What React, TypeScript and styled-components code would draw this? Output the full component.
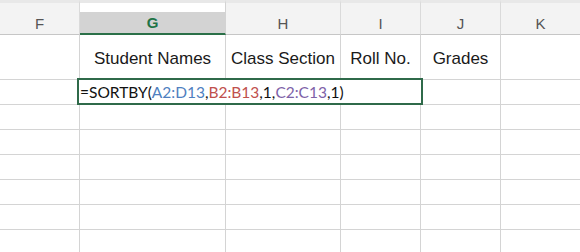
import styled, { createGlobalStyle } from "styled-components";

const GlobalStyle = createGlobalStyle`
  html, body {
    margin: 0;
    padding: 0;
    background: #ffffff;
    overflow: hidden;
  }
`;

const columns = [
  { name: "F", width: 80 },
  { name: "G", width: 146, active: true },
  { name: "H", width: 115 },
  { name: "I", width: 80 },
  { name: "J", width: 80 },
  { name: "K", width: 80 },
];

const headers = ["", "Student Names", "Class Section", "Roll No.", "Grades", ""];

const Sheet = styled.div`
  position: relative;
  width: 580px;
  height: 252px;
  overflow: hidden;
  font-family: "Liberation Sans", Arial, sans-serif;
`;

const Grid = styled.div`
  display: grid;
  grid-template-columns: ${columns.map((c) => c.width + "px").join(" ")};
  grid-template-rows: 35px 45px repeat(7, 25px);
`;

const ColHead = styled.div<{ $active?: boolean }>`
  display: flex;
  align-items: center;
  justify-content: center;
  box-sizing: border-box;
  padding-top: 9px;
  background: ${(p) => (p.$active ? "#d3d3d3" : "#f3f3f3")};
  background-clip: content-box;
  border-top: 3px solid #e8e8e8;
  border-bottom: ${(p) => (p.$active ? "2px solid #2b7048" : "1px solid #c6c6c6")};
  border-right: 1px solid ${(p) => (p.$active ? "#d3d3d3" : "#dadada")};
  font-size: 15px;
  font-weight: ${(p) => (p.$active ? 700 : 400)};
  color: ${(p) => (p.$active ? "#217346" : "#555555")};
  box-shadow: ${(p) => (p.$active ? "none" : "inset 0 9px 0 #f3f3f3")};
`;

const Cell = styled.div`
  display: flex;
  align-items: center;
  justify-content: center;
  box-sizing: border-box;
  border-right: 1px solid #d4d4d4;
  border-bottom: 1px solid #d4d4d4;
  font-size: 17px;
  color: #1a1a1a;
  white-space: nowrap;
  padding-top: 3px;
`;

const Editor = styled.div`
  position: absolute;
  left: 77px;
  top: 78px;
  width: 346px;
  height: 27px;
  box-sizing: border-box;
  border: 2px solid #2f6a4a;
  background: #ffffff;
  display: flex;
  align-items: center;
  padding-left: 1px;
  font-family: Lato, "Open Sans", sans-serif;
  font-size: 15.5px;
  color: #111111;
  white-space: nowrap;
`;

const Ref = styled.span<{ $color: string }>`
  color: ${(p) => p.$color};
`;

export default function App() {
  return (
    <>
      <GlobalStyle />
      <Sheet>
        <Grid>
          {columns.map((c) => (
            <ColHead key={c.name} $active={c.active}>
              {c.name}
            </ColHead>
          ))}
          {headers.map((h, i) => (
            <Cell key={"h" + i}>{h}</Cell>
          ))}
          {Array.from({ length: 7 * columns.length }).map((_, i) => (
            <Cell key={"c" + i} />
          ))}
        </Grid>
        <Editor>
          =SORTBY(<Ref $color="#4f7fc0">A2:D13</Ref>,<Ref $color="#c0504d">B2:B13</Ref>,1,
          <Ref $color="#7e62a8">C2:C13</Ref>,1)
        </Editor>
      </Sheet>
    </>
  );
}
